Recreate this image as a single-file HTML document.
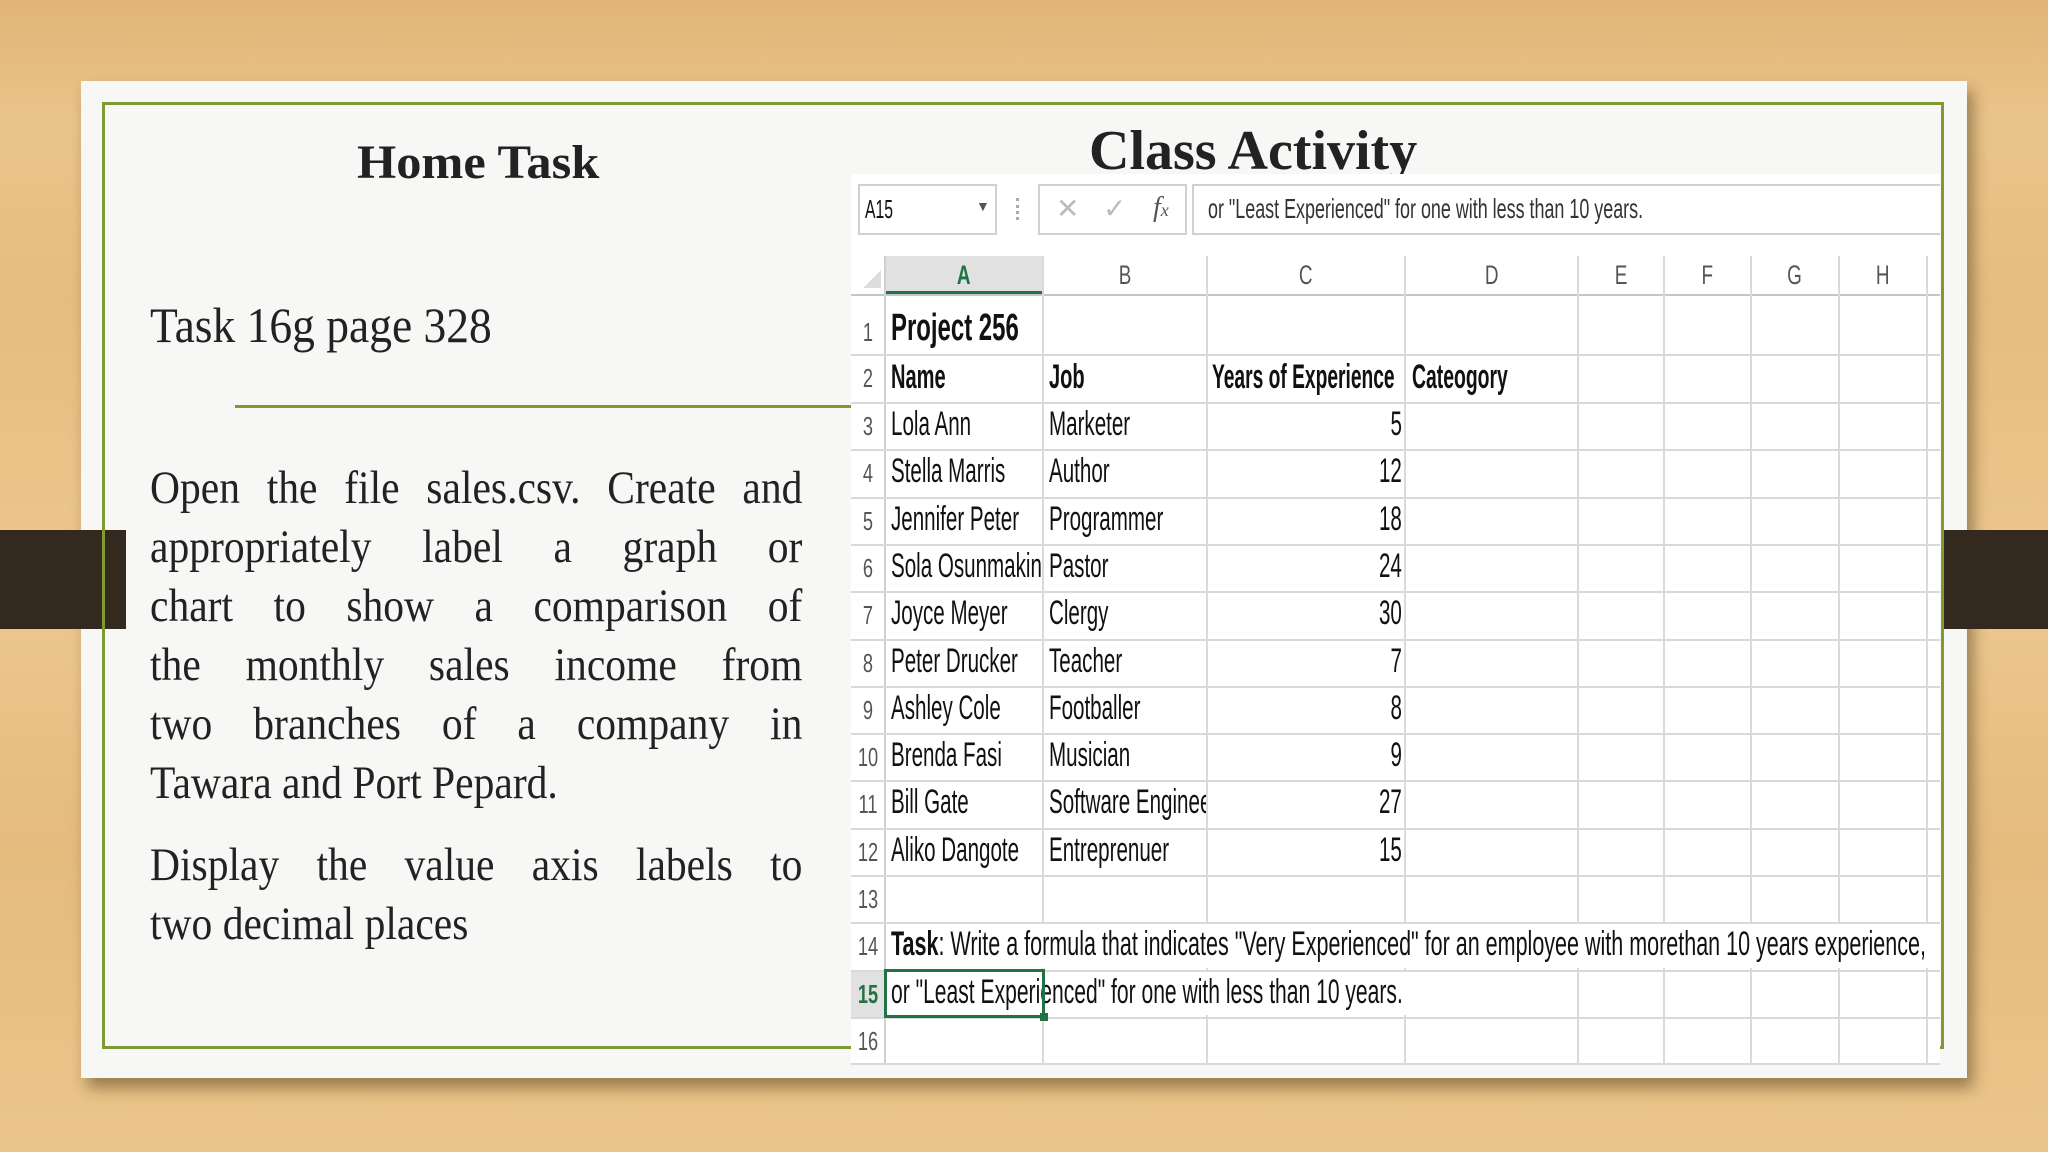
<!DOCTYPE html>
<html><head><meta charset="utf-8"><style>
*{margin:0;padding:0;box-sizing:border-box}
body{width:2048px;height:1152px;overflow:hidden;position:relative;
background:linear-gradient(180deg,#e2b476 0px,#e9c48a 120px,#e6bd80 300px,#ebc78e 600px,#e5bb7e 850px,#eac58b 1152px);
font-family:"Liberation Serif",serif;}
.abs{position:absolute}
.slide{left:81px;top:81px;width:1886px;height:997px;background:#f7f7f6;box-shadow:6px 10px 14px rgba(60,40,10,.45)}
.gb{left:102px;top:102px;width:1842px;height:947px;border:3px solid #7f9a30}
.band{background:#33291f;top:530px;height:99px}
.ser{color:#222;white-space:nowrap}
.line{width:738px;left:150px;font-size:47px;text-align:justify;text-align-last:justify;height:59px;white-space:nowrap;transform:scaleX(.884);transform-origin:left top}
.ss{left:851px;top:174px;width:1089px;height:891px;background:#fff;overflow:hidden}
.cell{position:absolute;font-family:"Liberation Sans",sans-serif;font-size:34px;color:#111;white-space:nowrap;transform:scaleX(.605);transform-origin:left center;line-height:40px}
.r{transform-origin:right center;text-align:right}
.hl{position:absolute;left:0;width:1091px;height:2px;background:#d9d9d9}
.vl{position:absolute;top:82px;width:2px;height:810px;background:#dadada}
.num{position:absolute;left:0;width:34px;text-align:center;font-family:"Liberation Sans",sans-serif;font-size:26px;color:#555;transform:scaleX(.7);line-height:40px}
.colh{position:absolute;top:82px;height:39px;text-align:center;font-family:"Liberation Sans",sans-serif;font-size:27px;color:#555;line-height:39px}
.colh span{display:inline-block;transform:scaleX(.7)}
</style></head><body>
<div class="abs slide"></div>
<div class="abs band" style="left:0;width:126px"></div>
<div class="abs band" style="left:1942px;width:106px"></div>
<div class="abs gb"></div>
<div class="abs ser" style="left:357px;top:135px;font-size:48px;font-weight:bold;transform:scaleX(1.05);transform-origin:left top">Home Task</div>
<div class="abs ser" style="left:150px;top:296px;font-size:50px;transform:scaleX(.91);transform-origin:left top">Task 16g page 328</div>
<div class="abs" style="left:235px;top:405px;width:617px;height:3px;background:#7f9a30"></div>
<div class="abs ser line" style="top:461px">Open the file sales.csv. Create and</div>
<div class="abs ser line" style="top:520px">appropriately label a graph or</div>
<div class="abs ser line" style="top:579px">chart to show a comparison of</div>
<div class="abs ser line" style="top:638px">the monthly sales income from</div>
<div class="abs ser line" style="top:697px">two branches of a company in</div>
<div class="abs ser line" style="top:756px;text-align-last:left">Tawara and Port Pepard.</div>
<div class="abs ser line" style="top:838px">Display the value axis labels to</div>
<div class="abs ser line" style="top:897px;text-align-last:left">two decimal places</div>
<div class="abs ser" style="left:1089px;top:118px;font-size:56px;font-weight:bold;height:56px;overflow:hidden;line-height:66px">Class Activity</div>

<div class="abs ss">
 <div class="abs" style="left:7px;top:10px;width:139px;height:51px;border:2px solid #d0d0d0"></div>
 <div class="cell" style="left:14px;top:15px;font-size:26px">A15</div>
 <div class="abs" style="left:125px;top:26px;font-size:14px;color:#555">▼</div>
 <div class="abs" style="left:165px;top:24px;width:3px;height:22px;border-left:3px dotted #aaa"></div>
 <div class="abs" style="left:187px;top:10px;width:149px;height:51px;border:2px solid #d0d0d0"></div>
 <div class="abs" style="left:205px;top:15px;font-family:'Liberation Sans';font-size:28px;color:#bbb;line-height:40px">✕</div>
 <div class="abs" style="left:252px;top:15px;font-family:'DejaVu Sans';font-size:28px;color:#bbb;line-height:40px">✓</div>
 <div class="abs" style="left:302px;top:14px;font-family:'Liberation Serif';font-style:italic;font-size:28px;color:#555;line-height:40px">f<span style="font-size:18px">x</span></div>
 <div class="abs" style="left:341px;top:10px;width:760px;height:51px;border:2px solid #d0d0d0;border-right:none"></div>
 <div class="cell" style="left:357px;top:15px;font-size:28px;color:#333;transform:scaleX(.64)">or "Least Experienced" for one with less than 10 years.</div>
 <div class="abs" style="left:34px;top:82px;width:158px;height:39px;background:#e1e1e1;border-bottom:4px solid #217346"></div>
 <div class="abs" style="left:12px;top:96px;width:0;height:0;border-left:18px solid transparent;border-bottom:18px solid #ddd"></div>
 <div class="colh" style="left:34px;width:158px;color:#217346;font-weight:bold"><span>A</span></div>
 <div class="colh" style="left:192px;width:164px"><span>B</span></div>
 <div class="colh" style="left:356px;width:198px"><span>C</span></div>
 <div class="colh" style="left:554px;width:173px"><span>D</span></div>
 <div class="colh" style="left:727px;width:86px"><span>E</span></div>
 <div class="colh" style="left:813px;width:87px"><span>F</span></div>
 <div class="colh" style="left:900px;width:88px"><span>G</span></div>
 <div class="colh" style="left:988px;width:88px"><span>H</span></div>
 <div class="hl" style="top:120px;background:#c6c6c6"></div>
 <div class="abs" style="left:0;top:796px;width:34px;height:47px;background:#e1e1e1"></div>
 <div class="vl" style="left:33px;background:#cfcfcf"></div>
 <div class="vl" style="left:191px"></div><div class="vl" style="left:355px"></div>
 <div class="vl" style="left:553px"></div><div class="vl" style="left:726px"></div>
 <div class="vl" style="left:812px"></div><div class="vl" style="left:899px"></div>
 <div class="vl" style="left:987px"></div><div class="vl" style="left:1075px"></div>
 <div class="abs" style="left:35px;top:750px;width:1056px;height:44px;background:#fff"></div>
 <div class="abs" style="left:35px;top:797px;width:555px;height:44px;background:#fff"></div>
 <div class="hl" style="top:180px"></div><div class="hl" style="top:228px"></div>
 <div class="hl" style="top:275px"></div><div class="hl" style="top:323px"></div>
 <div class="hl" style="top:370px"></div><div class="hl" style="top:417px"></div>
 <div class="hl" style="top:465px"></div><div class="hl" style="top:512px"></div>
 <div class="hl" style="top:559px"></div><div class="hl" style="top:606px"></div>
 <div class="hl" style="top:654px"></div><div class="hl" style="top:701px"></div>
 <div class="hl" style="top:748px"></div><div class="hl" style="top:796px"></div>
 <div class="hl" style="top:843px"></div><div class="hl" style="top:889px"></div>
 <div class="num" style="top:138px">1</div><div class="num" style="top:184px">2</div>
 <div class="num" style="top:232px">3</div><div class="num" style="top:279px">4</div>
 <div class="num" style="top:327px">5</div><div class="num" style="top:374px">6</div>
 <div class="num" style="top:421px">7</div><div class="num" style="top:469px">8</div>
 <div class="num" style="top:516px">9</div><div class="num" style="top:563px">10</div>
 <div class="num" style="top:610px">11</div><div class="num" style="top:658px">12</div>
 <div class="num" style="top:705px">13</div><div class="num" style="top:752px">14</div>
 <div class="num" style="top:800px;color:#217346;font-weight:bold">15</div><div class="num" style="top:847px">16</div>
 <div class="cell" style="left:40px;top:134px;font-weight:bold;font-size:38px;transform:scaleX(.63)">Project 256</div>
 <div class="cell" style="left:40px;top:183px;font-weight:bold;transform:scaleX(.59)">Name</div>
 <div class="cell" style="left:198px;top:183px;font-weight:bold;transform:scaleX(.59)">Job</div>
 <div class="cell" style="left:361px;top:183px;font-weight:bold;transform:scaleX(.565)">Years of Experience</div>
 <div class="cell" style="left:561px;top:183px;font-weight:bold;transform:scaleX(.57)">Cateogory</div>

 <div class="cell" style="left:40px;top:230px">Lola Ann</div><div class="cell" style="left:198px;top:230px">Marketer</div><div class="cell r" style="right:538px;top:230px">5</div>
 <div class="cell" style="left:40px;top:277px">Stella Marris</div><div class="cell" style="left:198px;top:277px">Author</div><div class="cell r" style="right:538px;top:277px">12</div>
 <div class="cell" style="left:40px;top:325px">Jennifer Peter</div><div class="cell" style="left:198px;top:325px">Programmer</div><div class="cell r" style="right:538px;top:325px">18</div>
 <div class="cell" style="left:40px;top:372px">Sola Osunmakin</div><div class="cell" style="left:198px;top:372px">Pastor</div><div class="cell r" style="right:538px;top:372px">24</div>
 <div class="cell" style="left:40px;top:419px">Joyce Meyer</div><div class="cell" style="left:198px;top:419px">Clergy</div><div class="cell r" style="right:538px;top:419px">30</div>
 <div class="cell" style="left:40px;top:467px">Peter Drucker</div><div class="cell" style="left:198px;top:467px">Teacher</div><div class="cell r" style="right:538px;top:467px">7</div>
 <div class="cell" style="left:40px;top:514px">Ashley Cole</div><div class="cell" style="left:198px;top:514px">Footballer</div><div class="cell r" style="right:538px;top:514px">8</div>
 <div class="cell" style="left:40px;top:561px">Brenda Fasi</div><div class="cell" style="left:198px;top:561px">Musician</div><div class="cell r" style="right:538px;top:561px">9</div>
 <div class="cell" style="left:40px;top:608px">Bill Gate</div>
 <div class="abs" style="left:193px;top:608px;width:162px;height:44px;overflow:hidden"><div class="cell" style="left:5px;top:0">Software Engineer</div></div>
 <div class="cell r" style="right:538px;top:608px">27</div>
 <div class="cell" style="left:40px;top:656px">Aliko Dangote</div><div class="cell" style="left:198px;top:656px">Entreprenuer</div><div class="cell r" style="right:538px;top:656px">15</div>

 <div class="cell" style="left:40px;top:750px;transform:scaleX(.633)"><b>Task</b>: Write a formula that indicates "Very Experienced" for an employee with morethan 10 years experience,</div>
 <div class="cell" style="left:40px;top:798px;transform:scaleX(.62)">or "Least Experienced" for one with less than 10 years.</div>
 <div class="abs" style="left:33px;top:795px;width:161px;height:49px;border:3px solid #217346"></div>
 <div class="abs" style="left:189px;top:839px;width:8px;height:8px;background:#217346"></div>
</div>
</body></html>
